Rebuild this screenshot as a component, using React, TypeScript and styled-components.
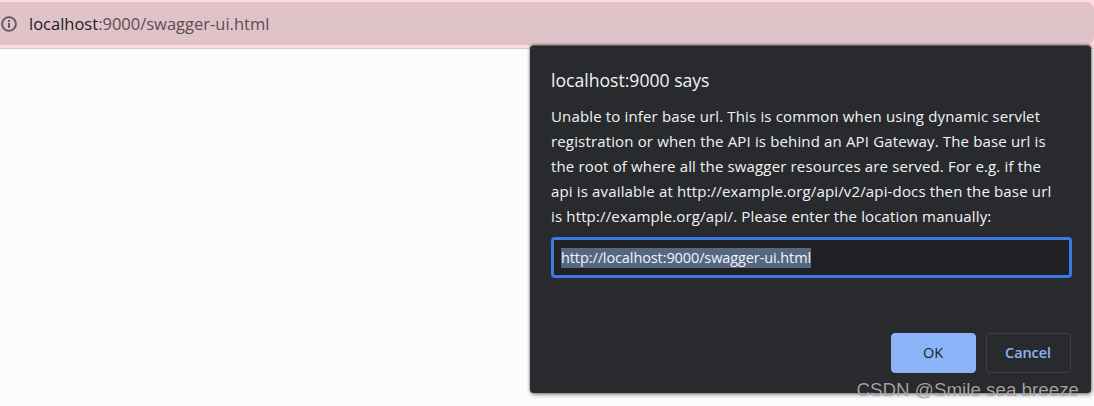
import React from 'react';
import styled, { createGlobalStyle } from 'styled-components';

const GlobalStyle = createGlobalStyle`
  html, body {
    margin: 0;
    height: 100%;
    background: #fcfcfc;
    font-family: "Open Sans", "Noto Sans", sans-serif;
    overflow: hidden;
  }
`;

const Page = styled.div`
  position: relative;
  width: 1094px;
  height: 406px;
  overflow: hidden;
`;

const Toolbar = styled.header`
  height: 49px;
  box-sizing: border-box;
  padding: 2px 0 3px;
  background: #ffdae0;
  border-bottom: 1px solid #e0c3c8;
`;

const AddressBar = styled.div`
  height: 43px;
  display: flex;
  align-items: center;
  gap: 12px;
  padding-left: 1px;
  background: #e0c3c8;
  border-radius: 0 8px 8px 0;
`;

const Url = styled.div`
  font-size: 16.5px;
  color: #5b4c55;
`;

const Host = styled.span`
  color: #201a26;
`;

const Dialog = styled.section`
  position: absolute;
  left: 530px;
  top: 45px;
  width: 561px;
  height: 348px;
  box-sizing: border-box;
  padding: 23px 20px 20px 21px;
  display: flex;
  flex-direction: column;
  background: #292a2d;
  border-top: 1px solid #635a5f;
  border-radius: 4px;
  box-shadow: 0 0 3px rgba(60, 64, 67, 0.75), 1px 2px 4px rgba(60, 64, 67, 0.45);
`;

const Title = styled.h2`
  margin: 0 0 13px;
  font-size: 17.6px;
  font-weight: 400;
  line-height: 22px;
  color: #f1f3f4;
`;

const Message = styled.p`
  margin: 0;
  font-size: 15px;
  line-height: 25px;
  letter-spacing: 0.15px;
  color: #f1f3f4;
  white-space: pre-line;
`;

const Field = styled.div`
  height: 41px;
  margin: 8px -1px 0 0;
  box-sizing: border-box;
  padding-left: 7px;
  display: flex;
  align-items: center;
  background: #202124;
  border: 3px solid #3b7ae6;
  border-radius: 4px;
`;

const Selected = styled.span`
  font-size: 14.5px;
  line-height: 20px;
  letter-spacing: -0.1px;
  color: #f1f3f4;
  background: #566781;
`;

const Actions = styled.div`
  margin-top: auto;
  display: flex;
  justify-content: flex-end;
  gap: 10px;
`;

const Button = styled.button<{ $primary?: boolean }>`
  width: 85px;
  height: 40px;
  padding: 0 1px 2px 0;
  box-sizing: border-box;
  font-family: inherit;
  font-size: 14.5px;
  font-weight: ${p => (p.$primary ? 400 : 600)};
  letter-spacing: -0.1px;
  color: ${p => (p.$primary ? '#202124' : '#8ab4f8')};
  background: ${p => (p.$primary ? '#8ab4f8' : 'transparent')};
  border: 1px solid ${p => (p.$primary ? '#8ab4f8' : '#3c4043')};
  border-radius: 4px;
`;

const Watermark = styled.div`
  position: absolute;
  right: 15px;
  top: 379px;
  font-family: "Liberation Sans", Arial, sans-serif;
  font-size: 18.8px;
  line-height: 22px;
  color: rgba(190, 190, 190, 0.85);
  text-shadow: 0 0 1px rgba(0, 0, 0, 0.45);
`;

const InfoIcon = () => (
  <svg width="16" height="16" viewBox="0 0 16 16" fill="none" aria-hidden="true">
    <circle cx="8" cy="8" r="6.9" stroke="#5f5a60" strokeWidth="1.9" />
    <rect x="7" y="7" width="2" height="4.8" fill="#5f5a60" />
    <rect x="7" y="4.1" width="2" height="1.9" fill="#5f5a60" />
  </svg>
);

const messageText = `Unable to infer base url. This is common when using dynamic servlet
registration or when the API is behind an API Gateway. The base url is
the root of where all the swagger resources are served. For e.g. if the
api is available at http://example.org/api/v2/api-docs then the base url
is http://example.org/api/. Please enter the location manually:`;

const App: React.FC = () => (
  <Page>
    <GlobalStyle />
    <Toolbar>
      <AddressBar>
        <InfoIcon />
        <Url>
          <Host>localhost</Host>:9000/swagger-ui.html
        </Url>
      </AddressBar>
    </Toolbar>
    <Dialog>
      <Title>localhost:9000 says</Title>
      <Message>{messageText}</Message>
      <Field>
        <Selected>http://localhost:9000/swagger-ui.html</Selected>
      </Field>
      <Actions>
        <Button $primary>OK</Button>
        <Button>Cancel</Button>
      </Actions>
    </Dialog>
    <Watermark>CSDN @Smile sea breeze</Watermark>
  </Page>
);

export default App;
